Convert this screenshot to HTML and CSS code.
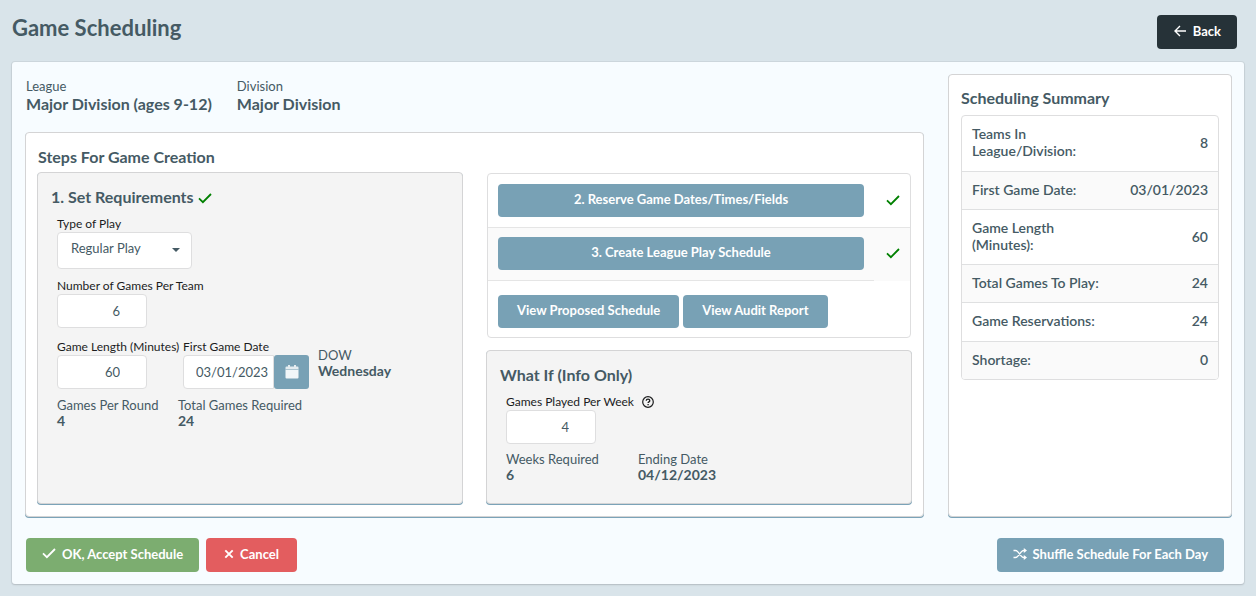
FILE: index.html
```html
<!DOCTYPE html>
<html lang="en">
<head>
<meta charset="utf-8">
<title>Game Scheduling</title>
<link rel="stylesheet" href="styles.css">
</head>
<body>
<svg class="sprite" aria-hidden="true">
  <symbol id="check" viewBox="0 0 14 12"><path d="M1 5.400 4.900 9.200 13 1" fill="none" stroke="currentColor" stroke-width="1.800"/></symbol>
</svg>
<header class="page-head">
  <h1 class="page-title">Game Scheduling</h1>
  <button class="btn btn-dark with-icon" type="button">
    <svg class="icon" viewBox="0 0 14 12"><path d="M13 6H2.200M7 1 2 6l5 5" fill="none" stroke="currentColor" stroke-width="1.400"/></svg>
    Back
  </button>
</header>
<main class="sheet">
  <div class="columns">
    <div class="work">
      <div class="facts facts-top">
        <div class="fact"><span>League</span><strong>Major Division (ages 9-12)</strong></div>
        <div class="fact"><span>Division</span><strong>Major Division</strong></div>
      </div>
      <section class="panel steps">
        <h2 class="heading">Steps For Game Creation</h2>
        <div class="step-grid">
          <section class="panel tint requirements">
            <h3 class="heading">1. Set Requirements <svg class="check" viewBox="0 0 14 12"><use href="#check"/></svg></h3>
            <div class="form">
              <div class="field field-type">
                <label for="type">Type of Play</label>
                <div class="select-wrap">
                  <select id="type" class="control select"><option>Regular Play</option></select>
                  <svg class="caret" viewBox="0 0 8 4"><path d="M0 0h8L4 4z" fill="currentColor"/></svg>
                </div>
              </div>
              <div class="field field-count">
                <label for="games">Number of Games Per Team</label>
                <input id="games" class="control number" type="text" value="6">
              </div>
              <div class="field-row">
                <div class="field field-length">
                  <label for="length">Game Length (Minutes)</label>
                  <input id="length" class="control number" type="text" value="60">
                </div>
                <div class="field">
                  <label for="date">First Game Date</label>
                  <div class="date-group">
                    <input id="date" class="control date" type="text" value="03/01/2023">
                    <button class="date-btn" type="button" aria-label="Open calendar">
                      <svg class="calendar" viewBox="0 0 14 14"><path d="M.5 5h13v7.500a1 1 0 0 1-1 1h-11a1 1 0 0 1-1-1z" fill="#fff" opacity=".9"/><path d="M.5 5V2.500a1 1 0 0 1 1-1H3V0h2v1.500h4V0h2v1.500h1.500a1 1 0 0 1 1 1V5z" fill="#fff" opacity=".8"/><path d="M.5 4.500h13" stroke="#78a1b5" stroke-width="1" opacity=".5"/></svg>
                    </button>
                  </div>
                </div>
                <div class="fact dow"><span>DOW</span><strong>Wednesday</strong></div>
              </div>
              <div class="facts totals">
                <div class="fact"><span>Games Per Round</span><strong>4</strong></div>
                <div class="fact"><span>Total Games Required</span><strong>24</strong></div>
              </div>
            </div>
          </section>
          <div class="side">
            <div class="actions">
              <div class="action-row"><button class="btn btn-blue wide" type="button">2. Reserve Game Dates/Times/Fields</button><svg class="check" viewBox="0 0 14 12"><use href="#check"/></svg></div>
              <div class="action-row shaded"><button class="btn btn-blue wide" type="button">3. Create League Play Schedule</button><svg class="check" viewBox="0 0 14 12"><use href="#check"/></svg></div>
              <div class="action-links">
                <button class="btn btn-blue" type="button">View Proposed Schedule</button>
                <button class="btn btn-blue" type="button">View Audit Report</button>
              </div>
            </div>
            <section class="panel tint what-if">
              <h3 class="heading">What If (Info Only)</h3>
              <div class="form">
                <div class="field">
                  <div class="label-row">
                    <label for="perweek">Games Played Per Week</label>
                    <svg class="help" viewBox="0 0 12 12" role="img" aria-label="Help"><circle cx="6" cy="6" r="5.300" fill="none" stroke="currentColor" stroke-width="1.200"/><path d="M4.200 4.800C4.300 3.700 5 3.200 6 3.200s1.800.6 1.800 1.500C7.800 5.900 6.100 5.800 6.100 7M6.100 7.900v1.300" fill="none" stroke="currentColor" stroke-width="1.300"/></svg>
                  </div>
                  <input id="perweek" class="control number" type="text" value="4">
                </div>
                <div class="facts estimates">
                  <div class="fact"><span>Weeks Required</span><strong>6</strong></div>
                  <div class="fact"><span>Ending Date</span><strong>04/12/2023</strong></div>
                </div>
              </div>
            </section>
          </div>
        </div>
      </section>
    </div>
    <aside class="panel summary">
      <h2 class="heading">Scheduling Summary</h2>
      <div class="table-frame">
        <table class="summary-table">
          <tbody>
            <tr><th scope="row">Teams In League/Division:</th><td>8</td></tr>
            <tr><th scope="row">First Game Date:</th><td>03/01/2023</td></tr>
            <tr><th scope="row">Game Length (Minutes):</th><td>60</td></tr>
            <tr><th scope="row">Total Games To Play:</th><td>24</td></tr>
            <tr><th scope="row">Game Reservations:</th><td>24</td></tr>
            <tr><th scope="row">Shortage:</th><td>0</td></tr>
          </tbody>
        </table>
      </div>
    </aside>
  </div>
  <footer class="foot">
    <button class="btn btn-green with-icon" type="button"><svg class="icon" viewBox="0 0 14 12"><use href="#check"/></svg>OK, Accept Schedule</button>
    <button class="btn btn-red" type="button"><svg class="icon cross" viewBox="0 0 10 10"><path d="m1.300 1.300 7.400 7.400m0-7.400L1.300 8.700" stroke="currentColor" stroke-width="1.900"/></svg>Cancel</button>
    <button class="btn btn-blue with-icon shuffle" type="button"><svg class="icon" viewBox="0 0 14 12"><path d="M.5 2.500h1.800c1.200 0 2 .6 2.800 1.600l3.200 4c.8 1 1.500 1.400 2.500 1.400h1.400M.5 9.500h1.800c1.200 0 2-.6 2.800-1.600l3.200-4c.8-1 1.500-1.400 2.500-1.400h1.400" fill="none" stroke="currentColor" stroke-width="1.300"/><path d="M10.800 0 14 2.500 10.800 5zM10.800 7 14 9.500 10.800 12z" fill="currentColor"/></svg>Shuffle Schedule For Each Day</button>
  </footer>
</main>
</body>
</html>
```
FILE: styles.css
```css
* { box-sizing: border-box; }
body {
  margin: 0;
  padding: 0 12px 12px;
  min-height: 100vh;
  background: #d9e4ea;
  color: #455a64;
  font-family: Lato, "Liberation Sans", sans-serif;
  font-size: 14px;
  line-height: 17px;
}
h1, h2, h3 { margin: 0; }
.sprite { position: absolute; width: 0; height: 0; }

.page-head {
  display: flex;
  justify-content: space-between;
  padding: 15px 7px 13px 0;
}
.page-title { font-size: 22px; line-height: 26px; font-weight: 700; }

.sheet {
  padding: 12px 12px 12px 13px;
  background: #f7fcff;
  border-radius: 3px;
  box-shadow: 0 1px 2px 0 rgba(34, 36, 38, .15), 0 0 0 1px rgba(34, 36, 38, .06);
}
.columns { display: grid; grid-template-columns: 899fr 284fr; gap: 24px; }
.work { display: flex; flex-direction: column; }

.facts { display: flex; }
.fact { line-height: 16px; }
.fact span, .fact strong { display: block; }
.fact span { font-size: 13px; font-weight: 400; }
.fact strong { font-weight: 700; }
.facts-top { gap: 25px; padding: 3px 0 19px 1px; }
.facts-top .fact { line-height: 18px; }
.facts-top strong { font-size: 16px; }

.panel {
  background: #fff;
  border: 1px solid #d4d4d5;
  border-radius: 4px;
  box-shadow: 0 1px 0 0 #7ba3b8;
}
.tint { background: #f4f4f4; }
.heading { font-size: 16px; line-height: 20px; font-weight: 700; }

.steps { flex: 1; padding: 14px 11px 12px; }
.steps > .heading { padding: 0 1px 5px; }
.step-grid { display: grid; grid-template-columns: 1fr 1fr; gap: 23px; }
.requirements { padding: 14px 13px; }
.form { padding: 0 6px; }
.check { width: 14px; height: 12px; color: #008000; flex: none; vertical-align: -2px; }

.field { display: flex; flex-direction: column; align-items: flex-start; }
.field label { font-size: 12px; line-height: 16px; color: #1b1c1d; white-space: nowrap; }
.field-type { padding-top: 9px; }
.field-count { padding-top: 9px; }
.field-row { display: flex; align-items: flex-start; padding-top: 11px; }
.field-length { width: 126px; }
.control {
  height: 34px;
  margin: 0;
  border: 1px solid #dededf;
  border-radius: 4px;
  background: #fff;
  color: #455a64;
  font: inherit;
  font-size: 13px;
}
.number { width: 90px; padding: 0 26px 0 8px; text-align: right; }
.select-wrap { position: relative; }
.select { width: 135px; height: 37px; padding: 0 13px 4px; appearance: none; }
.caret { position: absolute; right: 12px; top: 16px; width: 8px; height: 4px; pointer-events: none; }
.date-group { display: flex; }
.date { width: 91px; padding: 0 0 0 12px; border-radius: 4px 0 0 4px; }
.date-btn {
  display: grid;
  place-items: center;
  width: 35px;
  height: 34px;
  padding: 0;
  border: 0;
  border-radius: 3px;
  background: #78a1b5;
}
.calendar { width: 14px; height: 14px; }
.dow { padding: 8px 0 0 9px; }
.totals { display: grid; grid-template-columns: 121px 1fr; padding-top: 8px; }

.side { display: flex; flex-direction: column; gap: 12px; padding-top: 1px; }
.actions { border: 1px solid #dededf; border-radius: 4px; margin: 0 1px; }
.action-row {
  display: flex;
  align-items: center;
  gap: 22px;
  padding: 10px;
  border-bottom: 1px solid #e5e5e5;
}
.actions .btn { height: 33px; }
.shaded {
  padding-top: 9px;
  background: #fafafa;
}
/* The rule under the last shaded row stops short of the check column. */
.shaded {
  border-bottom: 0;
  background: linear-gradient(#e5e5e5, #e5e5e5) left bottom / calc(100% - 36px) 1px no-repeat, #fafafa;
  padding-bottom: 11px;
}
.action-links { display: flex; gap: 4px; padding: 14px 10px 9px; }
.action-links .btn { padding: 0 19px 2px; }
.what-if { flex: 1; padding: 14px 13px 20px; }
.what-if .field { padding-top: 9px; }
.label-row { display: flex; align-items: center; gap: 8px; }
.help { width: 12px; height: 12px; color: #1b1c1d; }
.estimates { display: grid; grid-template-columns: 132px 1fr; padding-top: 7px; }

.summary { padding: 13px 12px; }
.table-frame { margin-top: 7px; border: 1px solid #dededf; border-radius: 4px; overflow: hidden; }
.summary-table { width: 100%; border-collapse: collapse; }
.summary-table th, .summary-table td { padding: 9px 10px 11px; font-weight: 600; }
.summary-table th { text-align: left; width: 60%; padding-right: 0; }
.summary-table td { text-align: right; }
.summary-table tr:first-child > *, .summary-table tr:nth-child(5) > * { padding-bottom: 12px; }
.summary-table tr + tr { border-top: 1px solid #dfe0e1; }
.summary-table tr:nth-child(even) { background: #fafafa; }

.foot { display: flex; gap: 7px; padding: 21px 8px 0 1px; }
.shuffle { margin-left: auto; }
.btn {
  display: flex;
  align-items: center;
  justify-content: center;
  height: 34px;
  padding: 0 18px 2px;
  border: 0;
  border-radius: 4px;
  color: #fff;
  font: inherit;
  font-size: 13px;
  font-weight: 700;
  white-space: nowrap;
}
.with-icon { padding: 0 16px 2px; }
.icon { width: 14px; height: 12px; margin-right: 6px; }
.cross { width: 10px; height: 10px; }
.wide { flex: 1; }
.btn-dark { background: #263238; }
.btn-blue { background: #78a1b5; }
.btn-green { background: #7cad70; }
.btn-red { background: #e35d5f; }
```
